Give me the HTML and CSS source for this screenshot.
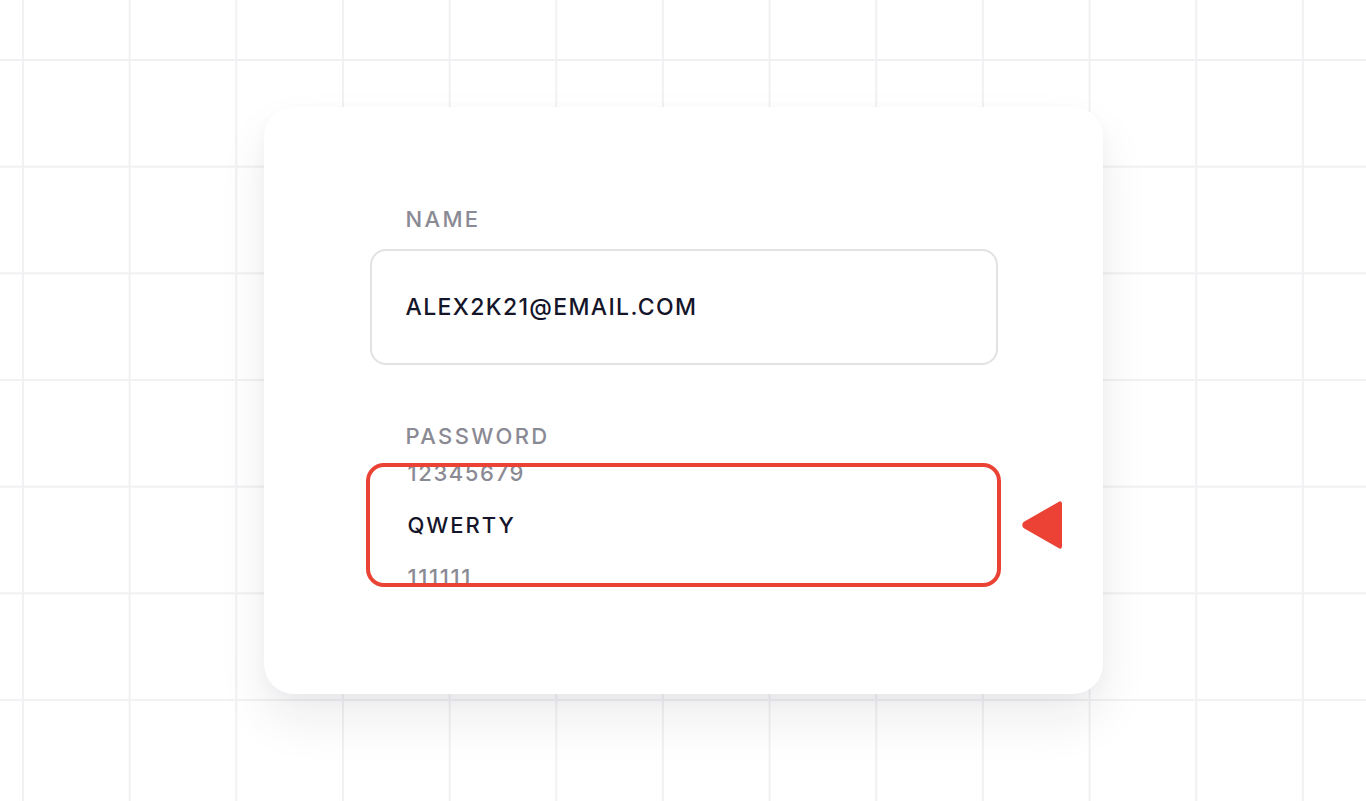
FILE: index.html
```html
<!DOCTYPE html>
<html lang="en">
<head>
<meta charset="utf-8">
<title>Login fields</title>
<link rel="stylesheet" href="styles.css">
</head>
<body>
<main class="stage">
  <section class="card">
    <div class="group">
      <div class="label">NAME</div>
      <div class="field">ALEX2K21@EMAIL.COM</div>
    </div>
    <div class="group group-pass">
      <div class="label">PASSWORD</div>
      <div class="picker-wrap">
        <div class="picker">
          <div class="item muted">12345679</div>
          <div class="item active">QWERTY</div>
          <div class="item muted">111111</div>
        </div>
        <svg class="pointer" width="44" height="50" viewBox="0 0 44 50" aria-hidden="true">
          <path d="M41 4 L41 46 Q41 50 37.5 48 L2.5 28 Q0 25 2.5 22 L37.5 2 Q41 0 41 4 Z" fill="#ec4236"/>
        </svg>
      </div>
    </div>
  </section>
</main>
</body>
</html>
```

FILE: styles.css
```css
* { box-sizing: border-box; }
html, body { margin: 0; padding: 0; }
body {
  font-family: Inter, "Liberation Sans", Arial, sans-serif;
  background-color: #ffffff;
  background-image:
    linear-gradient(to right, #f1f1f3 2px, transparent 2px),
    linear-gradient(to bottom, #f1f1f3 2px, transparent 2px);
  background-size: 106.67px 106.67px;
  background-position: 22px 59px;
  min-height: 801px;
}
.stage {
  height: 801px;
  display: flex;
  align-items: center;
  justify-content: center;
}
.card {
  width: 839px;
  height: 587px;
  background: #ffffff;
  border-radius: 30px;
  box-shadow: 0 26px 50px rgba(30, 30, 60, 0.075), 0 6px 16px rgba(30, 30, 60, 0.035);
  padding: 98px 105px 0 106px;
  display: flex;
  flex-direction: column;
}
.group { display: flex; flex-direction: column; }
.group-pass { margin-top: 57px; }
.label {
  font-size: 22px;
  line-height: 28px;
  font-weight: 500;
  letter-spacing: 2.35px;
  color: #8a8a94;
  padding-left: 36px;
  margin-bottom: 16px;
}
.group-pass .label { margin-bottom: 13px; }
.field {
  height: 116px;
  border: 2px solid #e2e2e5;
  border-radius: 16px;
  padding: 0 34px;
  display: flex;
  align-items: center;
  font-size: 23px;
  font-weight: 500;
  letter-spacing: 1.35px;
  color: #15152a;
}
.picker-wrap {
  position: relative;
  margin: 0 -3px 0 -4px;
}
.picker {
  height: 124px;
  border: 4px solid #ea4336;
  border-radius: 18px;
  overflow: hidden;
  display: flex;
  flex-direction: column;
  justify-content: center;
  padding-left: 38px;
}
.item {
  flex: 0 0 52px;
  height: 52px;
  display: flex;
  align-items: center;
  font-size: 22px;
  font-weight: 500;
}
.muted { color: #8a8a94; letter-spacing: 1.6px; }
.active { color: #15152a; letter-spacing: 2px; }
.pointer {
  position: absolute;
  right: -64px;
  top: 37px;
}
```
